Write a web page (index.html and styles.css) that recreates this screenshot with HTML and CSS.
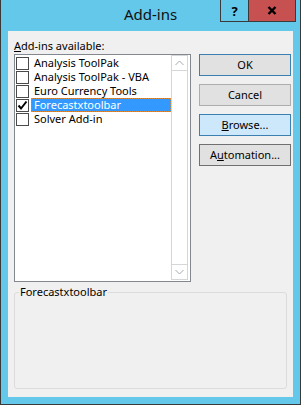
FILE: index.html
```html
<!DOCTYPE html>
<html lang="en">
<head>
    <meta charset="UTF-8">
    <title>Add-ins</title>
    <link rel="stylesheet" href="styles.css">
</head>
<body>

<div class="window">
    <div class="titlebar">
        <span class="title">Add-ins</span>
        <div class="caption-buttons">
            <div class="cap-btn help">?</div>
            <div class="cap-btn close">
                <svg width="10" height="9" viewBox="0 0 10 9">
                    <path d="M1.5 1 L8.5 8 M8.5 1 L1.5 8" stroke="#000" stroke-width="2.4" fill="none"/>
                </svg>
            </div>
        </div>
    </div>

    <div class="client">
        <div class="top">
            <div class="list-col">
                <div class="list-label"><u>A</u>dd-ins available:</div>
                <div class="listbox">
                    <ul class="items">
                        <li class="item"><span class="check"></span><span class="name">Analysis ToolPak</span></li>
                        <li class="item"><span class="check"></span><span class="name">Analysis ToolPak - VBA</span></li>
                        <li class="item"><span class="check"></span><span class="name">Euro Currency Tools</span></li>
                        <li class="item selected">
                            <span class="check">
                                <svg width="11" height="11" viewBox="0 0 11 11">
                                    <path d="M1.5 5.5 L4 8.5 L9.5 1.5" stroke="#000" stroke-width="2" fill="none"/>
                                </svg>
                            </span>
                            <span class="name">Forecastxtoolbar</span>
                        </li>
                        <li class="item"><span class="check"></span><span class="name">Solver Add-in</span></li>
                    </ul>
                    <div class="scrollbar">
                        <div class="arrow">
                            <svg width="9" height="6" viewBox="0 0 9 6"><path d="M0.5 5 L4.5 1 L8.5 5" stroke="#a8a8a8" fill="none"/></svg>
                        </div>
                        <div class="track"></div>
                        <div class="arrow">
                            <svg width="9" height="6" viewBox="0 0 9 6"><path d="M0.5 1 L4.5 5 L8.5 1" stroke="#a8a8a8" fill="none"/></svg>
                        </div>
                    </div>
                </div>
            </div>

            <div class="buttons">
                <div class="btn default">OK</div>
                <div class="btn">Cancel</div>
                <div class="btn hover"><u>B</u>rowse...</div>
                <div class="btn dark">A<u>u</u>tomation...</div>
            </div>
        </div>

        <fieldset class="group">
            <legend>Forecastxtoolbar</legend>
        </fieldset>
    </div>
</div>

</body>
</html>
```

FILE: styles.css
```css
body {
    margin: 0;
    font-family: "Noto Sans", sans-serif;
    font-size: 11px;
    color: #000;
}
.window {
    width: 301px;
    height: 405px;
    box-sizing: border-box;
    background: #63c8ea;
    border: 1px solid #3a3a3a;
    border-top: none;
}
.titlebar {
    height: 31px;
    display: grid;
    grid-template-columns: 1fr auto 1fr;
    align-items: start;
}
.title {
    grid-column: 2;
    font-size: 15px;
    line-height: 16px;
    padding-top: 6px;
    color: #111;
}
.caption-buttons {
    grid-column: 3;
    justify-self: end;
    display: flex;
    margin-right: 4px;
    border: 1px solid #3a3a3a;
    border-top: none;
}
.cap-btn {
    height: 21px;
    display: flex;
    align-items: center;
    justify-content: center;
}
.help {
    width: 27px;
    font-weight: bold;
    font-size: 13px;
    border-right: 1px solid #3a3a3a;
}
.close {
    width: 46px;
    background: #c75050;
}
.client {
    margin: 0 7px;
    height: 366px;
    background: #f0f0f0;
    padding: 0 2px 0 6px;
    box-sizing: border-box;
}
.top {
    display: flex;
    gap: 8px;
}
.list-label {
    height: 23px;
    line-height: 15px;
    padding-top: 7px;
    box-sizing: border-box;
}
.listbox {
    width: 177px;
    height: 228px;
    box-sizing: border-box;
    border: 1px solid #828790;
    background: #fff;
    display: flex;
    padding-right: 2px;
}
.items {
    list-style: none;
    margin: 0;
    padding: 1px 0 0 1px;
    flex: 1;
}
.item {
    height: 14px;
    display: flex;
    align-items: center;
    line-height: 12px;
}
.check {
    width: 13px;
    height: 13px;
    box-sizing: border-box;
    border: 1px solid #4a4a4a;
    background: #fff;
    margin-right: 2px;
    display: flex;
    align-items: center;
    justify-content: center;
}
.name {
    flex: 1;
    height: 14px;
    box-sizing: border-box;
    padding-left: 2px;
    border: 1px solid transparent;
    line-height: 12px;
    white-space: nowrap;
}
.selected .name {
    background: #3399ff;
    color: #fff;
    border: 1px dotted #d9883a;
}
.scrollbar {
    width: 17px;
    box-sizing: border-box;
    border: 1px solid #d6d6d6;
    margin-bottom: 1px;
    display: flex;
    flex-direction: column;
}
.arrow {
    height: 16px;
    box-sizing: border-box;
    border: 1px solid #d6d6d6;
    margin: 0 -1px;
    display: flex;
    align-items: center;
    justify-content: center;
}
.arrow:first-child {
    margin-top: -1px;
}
.arrow:last-child {
    margin-bottom: -1px;
}
.track {
    flex: 1;
}
.buttons {
    padding-top: 23px;
    display: flex;
    flex-direction: column;
    gap: 8px;
}
.btn {
    width: 92px;
    height: 22px;
    box-sizing: border-box;
    border: 1px solid #adadad;
    background: #e1e1e1;
    text-align: center;
    line-height: 20px;
}
.btn.default {
    border-color: #3c7fb1;
}
.btn.hover {
    border-color: #3c7fb1;
    background: #cde8fb;
}
.btn.dark {
    border-color: #707070;
}
.group {
    margin: 3px 0 0;
    width: 273px;
    height: 104px;
    box-sizing: border-box;
    padding: 0;
    border: 1px solid #dcdcdc;
    border-radius: 3px;
}
.group legend {
    padding: 0 1px;
    margin-left: 4px;
    line-height: 14px;
}
```
